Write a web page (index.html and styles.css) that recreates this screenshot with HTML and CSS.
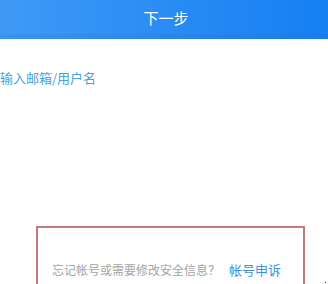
FILE: index.html
```html
<!DOCTYPE html>
<html lang="zh">
<head>
<meta charset="utf-8">
<link rel="stylesheet" href="styles.css">
</head>
<body>
<div class="page">
  <div class="next-btn">下一步</div>
  <div class="field">输入邮箱/用户名</div>
  <div class="help-box">
    <div class="help-line">
      <span class="help-text">忘记帐号或需要修改安全信息？</span>
      <span class="help-link">帐号申诉</span>
    </div>
  </div>
  <span class="dot"></span>
</div>
</body>
</html>
```
FILE: styles.css
```css
html, body {
  margin: 0;
  padding: 0;
  background: #fff;
}
body {
  font-family: "Noto Sans CJK SC", "Noto Sans", sans-serif;
  width: 328px;
  height: 284px;
  overflow: hidden;
}
.page {
  position: relative;
  height: 284px;
  display: flex;
  flex-direction: column;
}
.next-btn {
  height: 39px;
  background: linear-gradient(90deg, #3f9af6 0%, #2a8cf4 50%, #1580f3 100%);
  box-shadow: inset 0 -5px 0 rgba(40, 100, 180, 0.12);
  color: #fff;
  font-size: 15px;
  line-height: 36px;
  text-align: center;
  padding-left: 4px;
  flex: none;
}
.field {
  margin-top: 29px;
  height: 20px;
  line-height: 20px;
  font-size: 13px;
  color: #4aa2dc;
  flex: none;
}
.help-box {
  margin-top: 138px;
  margin-left: 36px;
  width: 265px;
  flex: 1;
  border: 2px solid #c8777f;
  border-bottom: none;
  box-sizing: content-box;
}
.help-line {
  padding: 33px 0 0 14px;
  display: flex;
  align-items: center;
  gap: 9px;
  height: 18px;
}
.help-text {
  font-size: 12px;
  color: #a4a4a4;
  line-height: 18px;
}
.help-link {
  font-size: 13px;
  color: #3d8fe0;
  line-height: 18px;
}
.dot {
  position: absolute;
  left: 325px;
  top: 282px;
  width: 1px;
  height: 1px;
  background: #333;
}
```
